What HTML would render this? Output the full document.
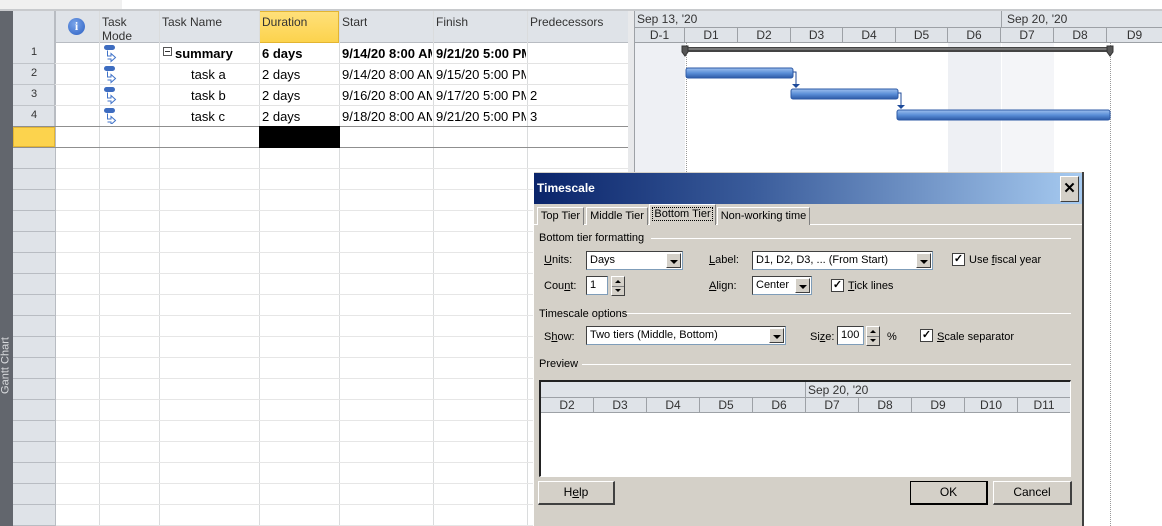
<!DOCTYPE html>
<html><head><meta charset="utf-8"><style>
*{margin:0;padding:0;box-sizing:border-box}
body{width:1162px;height:526px;overflow:hidden;background:#fff;position:relative;font-family:"Liberation Sans",sans-serif;font-size:12px;color:#000}
.a{position:absolute}
.t{position:absolute;font-size:13px;white-space:nowrap;overflow:hidden}
.hd{color:#333;font-size:12px}
.vl{position:absolute;width:1px;background:#dadcdd}
.hl{position:absolute;height:1px;background:#e3e3e3}
.inp{position:absolute;background:#fff;border:1px solid #7f9db9;border-top-color:#404040;border-left-color:#404040;font-size:11px;padding:2px 3px;white-space:nowrap}
.dd{position:absolute;right:1px;top:1px;bottom:1px;width:15px;background:#d4d0c8;border:1px solid;border-color:#fff #404040 #404040 #fff}
.dd:after{content:"";position:absolute;left:3px;top:6px;border-left:4px solid transparent;border-right:4px solid transparent;border-top:4px solid #000}
.cb{position:absolute;width:13px;height:13px;background:#fff;border:1px solid #404040;font-size:11px;line-height:11px;text-align:center;font-weight:bold}
.btn{position:absolute;background:#d4d0c8;border:1px solid;border-color:#fff #404040 #404040 #fff;text-align:center;font-size:12px;line-height:21px}
.grp{position:absolute;height:1px;background:#a0a0a0;border-bottom:1px solid #fff}
.spin{position:absolute;width:14px;background:#d4d0c8;border:1px solid;border-color:#fff #404040 #404040 #fff}
.spin:before{content:"";position:absolute;left:3px;top:3px;border-left:3px solid transparent;border-right:3px solid transparent;border-bottom:3px solid #000}
.spin:after{content:"";position:absolute;left:3px;bottom:3px;border-left:3px solid transparent;border-right:3px solid transparent;border-top:3px solid #000}
.sd{position:absolute;left:0;right:0;top:9px;height:1px;background:#808080}
</style></head><body>
<div class="a" style="left:0;top:0;width:122px;height:9px;background:#f0f0f0"></div>
<div class="a" style="left:0;top:9px;width:1162px;height:2px;background:#c8cacd"></div>
<div class="a" style="left:0;top:11px;width:13px;height:515px;background:#62666d"></div>
<div class="a" style="left:-30px;top:359px;width:72px;height:13px;transform:rotate(-90deg);color:#d8dadd;font-size:11px;text-align:center;line-height:13px">Gantt Chart</div>
<div class="a" style="left:13px;top:11px;width:42px;height:515px;background:#dfe3e8;border-right:1px solid #b8bcc2"></div>
<div class="a" style="left:55px;top:11px;width:573px;height:32px;background:#dfe3e8;border-bottom:1px solid #b8bcc2"></div>
<div class="a" style="left:259px;top:11px;width:80px;height:32px;background:linear-gradient(#ffe07a,#fcd34d);border:1px solid #e3b531"></div>
<div class="a" style="left:68px;top:18px;width:17px;height:17px;border-radius:50%;background:radial-gradient(circle at 40% 35%,#7aa5ea,#2b5fc2);color:#fff;font-weight:bold;font-size:12px;text-align:center;line-height:17px;font-family:'Liberation Serif',serif">i</div>
<div class="t hd" style="left:102px;top:15px;line-height:14px">Task<br>Mode</div>
<div class="t hd" style="left:162px;top:15px">Task Name</div>
<div class="t hd" style="left:262px;top:15px">Duration</div>
<div class="t hd" style="left:342px;top:15px">Start</div>
<div class="t hd" style="left:436px;top:15px">Finish</div>
<div class="t hd" style="left:530px;top:15px">Predecessors</div>
<div class="vl" style="left:55px;top:11px;height:515px;background:#b8bcc2"></div>
<div class="vl" style="left:99px;top:11px;height:515px"></div>
<div class="vl" style="left:159px;top:11px;height:515px"></div>
<div class="vl" style="left:259px;top:11px;height:515px"></div>
<div class="vl" style="left:339px;top:11px;height:515px"></div>
<div class="vl" style="left:433px;top:11px;height:515px"></div>
<div class="vl" style="left:527px;top:11px;height:515px"></div>
<div class="vl" style="left:628px;top:11px;height:515px;background:#e8e9eb;width:7px"></div>
<div class="vl" style="left:634px;top:11px;height:515px;background:#9da1a6"></div>
<div class="hl" style="left:55px;top:63px;width:573px"></div>
<div class="hl" style="left:55px;top:84px;width:573px"></div>
<div class="hl" style="left:55px;top:105px;width:573px"></div>
<div class="hl" style="left:13px;top:126px;width:615px;background:#8f8f8f"></div>
<div class="hl" style="left:13px;top:147px;width:615px;background:#8f8f8f"></div>
<div class="a" style="left:13px;top:63px;width:42px;height:1px;background:#c0c4c9"></div>
<div class="a" style="left:13px;top:84px;width:42px;height:1px;background:#c0c4c9"></div>
<div class="a" style="left:13px;top:105px;width:42px;height:1px;background:#c0c4c9"></div>
<div class="a" style="left:13px;top:127px;width:42px;height:20px;background:#fcd34d;border:1px solid #e3b531"></div>
<div class="a" style="left:13px;top:148px;width:42px;height:378px;background:repeating-linear-gradient(to bottom,#dfe3e8 0,#dfe3e8 20px,#b8bcc2 20px,#b8bcc2 21px)"></div>
<div class="a" style="left:56px;top:148px;width:572px;height:378px;background:repeating-linear-gradient(to bottom,transparent 0,transparent 20px,#e6e6e6 20px,#e6e6e6 21px)"></div>
<div class="t" style="left:13px;top:46px;width:42px;text-align:center;font-size:11px;color:#333">1</div>
<div class="t" style="left:13px;top:67px;width:42px;text-align:center;font-size:11px;color:#333">2</div>
<div class="t" style="left:13px;top:88px;width:42px;text-align:center;font-size:11px;color:#333">3</div>
<div class="t" style="left:13px;top:109px;width:42px;text-align:center;font-size:11px;color:#333">4</div>
<svg class="a" style="left:103px;top:44px" width="20" height="80" viewBox="0 0 20 80">
<g>
<rect x="1" y="1" width="11" height="5" rx="2.5" fill="#3d6cc0"/>
<path d="M4.5 6.5v5.5h3.5v-2.5l4.5 4-4.5 4v-2.5H4.5" fill="#fff" stroke="#3f72c8" stroke-width="1"/>
</g>
<g transform="translate(0,21)">
<rect x="1" y="1" width="11" height="5" rx="2.5" fill="#3d6cc0"/>
<path d="M4.5 6.5v5.5h3.5v-2.5l4.5 4-4.5 4v-2.5H4.5" fill="#fff" stroke="#3f72c8" stroke-width="1"/>
</g>
<g transform="translate(0,42)">
<rect x="1" y="1" width="11" height="5" rx="2.5" fill="#3d6cc0"/>
<path d="M4.5 6.5v5.5h3.5v-2.5l4.5 4-4.5 4v-2.5H4.5" fill="#fff" stroke="#3f72c8" stroke-width="1"/>
</g>
<g transform="translate(0,63)">
<rect x="1" y="1" width="11" height="5" rx="2.5" fill="#3d6cc0"/>
<path d="M4.5 6.5v5.5h3.5v-2.5l4.5 4-4.5 4v-2.5H4.5" fill="#fff" stroke="#3f72c8" stroke-width="1"/>
</g>
</svg>
<div class="a" style="left:163px;top:47px;width:9px;height:9px;border:1px solid #555;background:#fff"></div>
<div class="a" style="left:165px;top:51px;width:5px;height:1px;background:#333"></div>
<div class="t" style="left:175px;top:46px;font-weight:bold">summary</div>
<div class="t" style="left:262px;top:46px;font-weight:bold">6 days</div>
<div class="t" style="left:342px;top:46px;font-weight:bold;width:90px">9/14/20 8:00 AM</div>
<div class="t" style="left:436px;top:46px;font-weight:bold;width:90px">9/21/20 5:00 PM</div>
<div class="t" style="left:191px;top:67px">task a</div>
<div class="t" style="left:262px;top:67px">2 days</div>
<div class="t" style="left:342px;top:67px;width:90px">9/14/20 8:00 AM</div>
<div class="t" style="left:436px;top:67px;width:90px">9/15/20 5:00 PM</div>
<div class="t" style="left:191px;top:88px">task b</div>
<div class="t" style="left:262px;top:88px">2 days</div>
<div class="t" style="left:342px;top:88px;width:90px">9/16/20 8:00 AM</div>
<div class="t" style="left:436px;top:88px;width:90px">9/17/20 5:00 PM</div>
<div class="t" style="left:530px;top:88px">2</div>
<div class="t" style="left:191px;top:109px">task c</div>
<div class="t" style="left:262px;top:109px">2 days</div>
<div class="t" style="left:342px;top:109px;width:90px">9/18/20 8:00 AM</div>
<div class="t" style="left:436px;top:109px;width:90px">9/21/20 5:00 PM</div>
<div class="t" style="left:530px;top:109px">3</div>
<div class="a" style="left:259px;top:126px;width:81px;height:22px;background:#000"></div>
<div class="a" style="left:635px;top:43px;width:50px;height:483px;background:#eef0f4"></div>
<div class="a" style="left:948px;top:43px;width:53px;height:483px;background:#eef0f4"></div>
<div class="a" style="left:1002px;top:43px;width:52px;height:483px;background:#f4f5f8"></div>
<div class="a" style="left:686px;top:43px;height:483px;border-left:1px dotted #999"></div>
<div class="a" style="left:1110px;top:43px;height:483px;border-left:1px dotted #999"></div>
<div class="a" style="left:635px;top:11px;width:527px;height:32px;background:#dfe3e8;border-bottom:1px solid #9da1a6"></div>
<div class="a" style="left:635px;top:27px;width:527px;height:1px;background:#9da1a6"></div>
<div class="a" style="left:1001px;top:11px;width:1px;height:16px;background:#9da1a6"></div>
<div class="t" style="left:637px;top:12px;font-size:12px;color:#333">Sep 13, '20</div>
<div class="t" style="left:1007px;top:12px;font-size:12px;color:#333">Sep 20, '20</div>
<div class="a" style="left:635px;top:28px;width:527px;height:14px;display:flex;font-size:12px;color:#333;line-height:14px">
<div style="width:50px;text-align:center;border-right:1px solid #9da1a6">D-1</div>
<div style="width:53px;text-align:center;border-right:1px solid #9da1a6">D1</div>
<div style="width:53px;text-align:center;border-right:1px solid #9da1a6">D2</div>
<div style="width:52px;text-align:center;border-right:1px solid #9da1a6">D3</div>
<div style="width:53px;text-align:center;border-right:1px solid #9da1a6">D4</div>
<div style="width:52px;text-align:center;border-right:1px solid #9da1a6">D5</div>
<div style="width:53px;text-align:center;border-right:1px solid #9da1a6">D6</div>
<div style="width:53px;text-align:center;border-right:1px solid #9da1a6">D7</div>
<div style="width:53px;text-align:center;border-right:1px solid #9da1a6">D8</div>
<div style="width:55px;text-align:center">D9</div>
</div>
<svg class="a" style="left:635px;top:43px" width="527" height="85">
<defs><linearGradient id="bg" x1="0" y1="0" x2="0" y2="1"><stop offset="0" stop-color="#9fc0ee"/><stop offset=".5" stop-color="#5b8fd8"/><stop offset="1" stop-color="#2d5aa6"/></linearGradient></defs>
<rect x="50" y="4" width="425" height="5" fill="#444"/>
<rect x="50" y="5" width="425" height="2" fill="#777"/>
<path d="M47 3h6v6l-3 4-3-4z" fill="#555" stroke="#333"/>
<path d="M472 3h6v6l-3 4-3-4z" fill="#555" stroke="#333"/>
<rect x="51" y="25" width="107" height="10" rx="2" fill="url(#bg)" stroke="#2d5aa6"/>
<rect x="156" y="46" width="107" height="10" rx="2" fill="url(#bg)" stroke="#2d5aa6"/>
<rect x="262" y="67" width="213" height="10" rx="2" fill="url(#bg)" stroke="#2d5aa6"/>
<path d="M158 29h3v12" fill="none" stroke="#1d4a9a"/><path d="M157 41h8l-4 4z" fill="#1d4a9a"/>
<path d="M263 50h3v12" fill="none" stroke="#1d4a9a"/><path d="M262 62h8l-4 4z" fill="#1d4a9a"/>
</svg>
<div class="a" style="left:533px;top:172px;width:551px;height:354px;background:#d4d0c8;border-left:1px solid #fff;border-right:2px solid #404040"></div>
<div class="a" style="left:534px;top:173px;width:548px;height:31px;background:linear-gradient(to right,#0a246a,#3a5c9b 40%,#a6caf0)"></div>
<div class="t" style="left:537px;top:181px;color:#fff;font-weight:bold;font-size:12px">Timescale</div>
<div class="btn" style="left:1060px;top:176px;width:19px;height:26px;line-height:24px;font-weight:bold;font-size:15px">✕</div>
<div class="a" style="left:534px;top:224px;width:548px;height:1px;background:#fff"></div>
<div class="btn" style="left:537px;top:207px;width:47px;height:18px;line-height:16px;font-size:11px;border-bottom:none;border-right-color:#808080">Top Tier</div>
<div class="btn" style="left:586px;top:207px;width:62px;height:18px;line-height:16px;font-size:11px;border-bottom:none;border-right-color:#808080">Middle Tier</div>
<div class="btn" style="left:649px;top:204px;width:67px;height:21px;line-height:18px;font-size:11px;border-bottom:none;border-right-color:#808080"><span style="border:1px dotted #000;padding:0 1px">Bottom Tier</span></div>
<div class="btn" style="left:717px;top:207px;width:93px;height:18px;line-height:16px;font-size:11px;border-bottom:none;border-right-color:#808080">Non-working time</div>
<div class="t" style="left:539px;top:232px;font-size:11px">Bottom tier formatting</div>
<div class="grp" style="left:651px;top:238px;width:420px"></div>
<div class="t" style="left:544px;top:254px;font-size:11px"><u>U</u>nits:</div>
<div class="inp" style="left:586px;top:251px;width:97px;height:19px">Days<span class="dd"></span></div>
<div class="t" style="left:709px;top:254px;font-size:11px"><u>L</u>abel:</div>
<div class="inp" style="left:752px;top:251px;width:181px;height:19px">D1, D2, D3, ... (From Start)<span class="dd"></span></div>
<div class="cb" style="left:952px;top:253px">✓</div>
<div class="t" style="left:969px;top:254px;font-size:11px">Use <u>f</u>iscal year</div>
<div class="t" style="left:544px;top:280px;font-size:11px">Cou<u>n</u>t:</div>
<div class="inp" style="left:586px;top:276px;width:22px;height:19px">1</div>
<div class="spin" style="left:611px;top:276px;height:20px"><span class="sd"></span></div>
<div class="t" style="left:709px;top:280px;font-size:11px"><u>A</u>lign:</div>
<div class="inp" style="left:752px;top:276px;width:60px;height:19px">Center<span class="dd"></span></div>
<div class="cb" style="left:831px;top:279px">✓</div>
<div class="t" style="left:848px;top:280px;font-size:11px"><u>T</u>ick lines</div>
<div class="t" style="left:539px;top:308px;font-size:11px">Timescale options</div>
<div class="grp" style="left:626px;top:313px;width:445px"></div>
<div class="t" style="left:544px;top:331px;font-size:11px">S<u>h</u>ow:</div>
<div class="inp" style="left:586px;top:326px;width:200px;height:19px">Two tiers (Middle, Bottom)<span class="dd"></span></div>
<div class="t" style="left:810px;top:331px;font-size:11px">Si<u>z</u>e:</div>
<div class="inp" style="left:837px;top:326px;width:27px;height:19px">100</div>
<div class="spin" style="left:866px;top:326px;height:20px"><span class="sd"></span></div>
<div class="t" style="left:887px;top:331px;font-size:11px">%</div>
<div class="cb" style="left:920px;top:329px">✓</div>
<div class="t" style="left:937px;top:331px;font-size:11px"><u>S</u>cale separator</div>
<div class="t" style="left:539px;top:358px;font-size:11px">Preview</div>
<div class="grp" style="left:582px;top:364px;width:489px"></div>
<div class="a" style="left:539px;top:380px;width:532px;height:97px;background:#fff;border:2px solid #222;border-right:1px solid #fff;border-bottom:1px solid #fff"></div>
<div class="a" style="left:541px;top:382px;width:529px;height:31px;background:#dfe3e8;border-bottom:1px solid #9da1a6"></div>
<div class="a" style="left:541px;top:397px;width:529px;height:1px;background:#9da1a6"></div>
<div class="a" style="left:805px;top:382px;width:1px;height:15px;background:#9da1a6"></div>
<div class="t" style="left:808px;top:383px;font-size:12px;color:#333">Sep 20, '20</div>
<div class="a" style="left:541px;top:398px;width:529px;height:15px;display:flex;font-size:12px;color:#333;line-height:15px">
<div style="width:53px;text-align:center;border-right:1px solid #9da1a6">D2</div>
<div style="width:53px;text-align:center;border-right:1px solid #9da1a6">D3</div>
<div style="width:53px;text-align:center;border-right:1px solid #9da1a6">D4</div>
<div style="width:53px;text-align:center;border-right:1px solid #9da1a6">D5</div>
<div style="width:53px;text-align:center;border-right:1px solid #9da1a6">D6</div>
<div style="width:53px;text-align:center;border-right:1px solid #9da1a6">D7</div>
<div style="width:53px;text-align:center;border-right:1px solid #9da1a6">D8</div>
<div style="width:53px;text-align:center;border-right:1px solid #9da1a6">D9</div>
<div style="width:53px;text-align:center;border-right:1px solid #9da1a6">D10</div>
<div style="width:52px;text-align:center">D11</div>
</div>
<div class="btn" style="left:538px;top:481px;width:77px;height:24px;border-right-width:2px;border-bottom-width:2px">H<u>e</u>lp</div>
<div class="btn" style="left:910px;top:481px;width:78px;height:24px;border:2px solid #000;border-top-width:1px;border-left-width:1px">OK</div>
<div class="btn" style="left:993px;top:481px;width:79px;height:24px;border-right-width:2px;border-bottom-width:2px">Cancel</div>
</body></html>
